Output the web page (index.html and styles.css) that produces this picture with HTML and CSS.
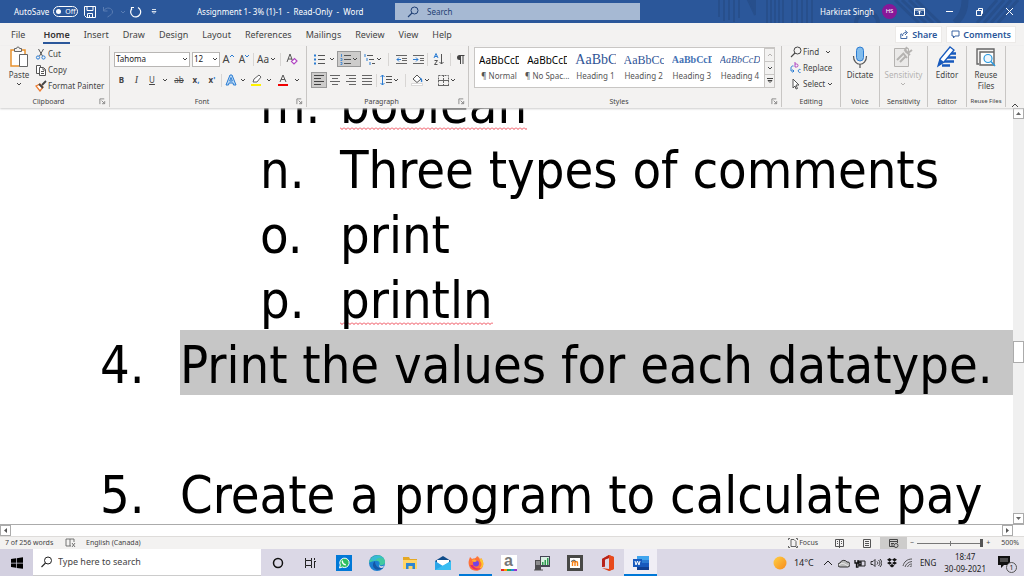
FILE: index.html
```html
<!DOCTYPE html>
<html lang="en">
<head>
<meta charset="utf-8">
<title>Assignment 1- 3% (1)-1 - Read-Only - Word</title>
<link rel="stylesheet" href="styles.css">
</head>
<body>
<svg class="defs" aria-hidden="true">
  <symbol id="chev" viewBox="0 0 8 8"><path d="M2 3l2 2 2-2" fill="none" stroke="currentColor"/></symbol>
  <symbol id="launch" viewBox="0 0 8 8"><path d="M1 7V1h5M3 3l3 3M6.500 3.500v3h-3" fill="none" stroke="#666" stroke-width=".8"/></symbol>
  <symbol id="lens" viewBox="0 0 12 12"><circle cx="7.500" cy="4.500" r="3.500" fill="none" stroke="currentColor"/><path d="M5 7L1 11" stroke="currentColor" stroke-width="1.100"/></symbol>
</svg>
<div class="app">
  <header class="titlebar">
    <svg class="pattern" viewBox="0 0 310 23" preserveAspectRatio="xMaxYMin slice" fill="none" stroke="#274f8c" stroke-width="2">
      <path d="M5 0v17M10 0v21M15 0v20M20 0v22M25 0v18M53 0v23M57 0v23M61 0v23M65 0v23M69 0v23M78 0v23M83 0v23M88 0v23M93 0v23M98 0v23"/>
      <path d="M34 0l7 15V0z" fill="#274f8c"/>
      <path d="M142 23a11 11 0 0 1 22 0" stroke-width="4"/>
      <path d="M188 0l24 23M195 0l24 23M202 0l24 23M181 0l24 23" stroke-width="3"/>
      <path d="M251 0a30 30 0 0 1-10 23" stroke-width="7"/>
      <path d="M263 23l20-23M270 23l20-23M277 23l20-23M284 23l20-23" stroke-width="3"/>
    </svg>
    <div class="quick">
      <label class="autosave">AutoSave <span class="toggle"><input type="checkbox" aria-label="AutoSave"><i></i>Off</span></label>
      <button class="w16" aria-label="Save"><svg width="12" height="12" viewBox="0 0 12 12" fill="none" stroke="#fff"><path d="M.500.500h11v11h-9l-2-2zM3 .500v4h6v-4M3.500 11.500v-4h5v4M5.500 9v2"/></svg></button>
      <button class="w20 faded" aria-label="Undo"><svg width="12" height="12" viewBox="0 0 12 12" fill="none" stroke="currentColor"><path d="M1.500 1v4h4M1.500 5c3-5 9-3 9 1 0 2-2 3-5 5"/></svg></button>
      <button class="w10 faded" aria-label="Undo options"><svg class="chev"><use href="#chev"/></svg></button>
      <button class="w16" aria-label="Redo"><svg width="12" height="12" viewBox="0 0 12 12" fill="none" stroke="#fff" stroke-width="1.200"><path d="M4 1.500H1.500V4M2 2.500a5 5 0 1 0 6-1"/></svg></button>
      <button class="w20" aria-label="Customize"><svg width="6" height="6" viewBox="0 0 6 6" fill="none" stroke="#fff" stroke-width=".8"><path d="M1 .500h4M1 2.500l2 2 2-2z"/></svg></button>
    </div>
    <h1 class="doctitle">Assignment 1- 3% (1)-1&nbsp; -&nbsp; Read-Only&nbsp; -&nbsp; Word</h1>
    <label class="search"><svg width="12" height="12"><use href="#lens"/></svg><input type="text" placeholder="Search" aria-label="Search"></label>
    <div class="account">
      <span>Harkirat Singh</span><span class="avatar">HS</span>
      <button aria-label="Ribbon display options"><svg width="11" height="9" viewBox="0 0 11 9" fill="none" stroke="#fff"><path d="M.500 1.500h10v7H.500zM.500 3h10M5.500 7.500V4M4 5.500L5.500 4 7 5.500"/></svg></button>
      <button aria-label="Minimize"><svg width="9" height="9" viewBox="0 0 9 9" stroke="#fff"><path d="M1 4.500h7" /></svg></button>
      <button aria-label="Restore"><svg width="9" height="9" viewBox="0 0 9 9" fill="none" stroke="#fff"><path d="M1.500 3.500h5v5h-5zM3.500 3V1.500h4v5H7"/></svg></button>
      <button aria-label="Close"><svg width="9" height="9" viewBox="0 0 9 9" stroke="#fff"><path d="M1 1l7 7M8 1L1 8"/></svg></button>
    </div>
  </header>

  <nav class="tabs">
    <button class="file">File</button><button class="current">Home</button><button>Insert</button><button>Draw</button><button>Design</button><button>Layout</button><button>References</button><button>Mailings</button><button>Review</button><button>View</button><button>Help</button>
    <div class="tabs-right">
      <button class="pill"><svg width="9" height="9" viewBox="0 0 9 9" fill="none" stroke="currentColor" stroke-width=".9"><path d="M2 4H.800v4.500h6V6M2.500 6c0-3 2-3.500 4-3.500M5 .500L7.500 2.500 5 5"/></svg>Share</button>
      <button class="pill"><svg width="9" height="9" viewBox="0 0 9 9" fill="none" stroke="currentColor" stroke-width=".9"><path d="M1 1h7v5H4L2.500 8V6H1z"/></svg>Comments</button>
    </div>
  </nav>

  <section class="ribbon">
    <div class="group g-clip">
      <div class="body clip">
        <button class="big"><svg width="20" height="22" viewBox="0 0 20 22" fill="none"><path d="M2 4h14v16H2z" fill="#fff" stroke="#e8912d" stroke-width="1.500"/><path d="M5.500 5.500v-3h2a1.500 1.500 0 0 1 3 0h2v3z" fill="#f3f2f1" stroke="#666"/><path d="M10.500 8.500h8v12h-8z" fill="#fff" stroke="#666"/></svg>Paste<svg class="chev"><use href="#chev"/></svg></button>
        <div class="stack">
          <button><svg width="12" height="12" viewBox="0 0 12 12" fill="none"><path d="M3.500 1l4 7M8.500 1l-4 7" stroke="#555"/><circle cx="3" cy="9.500" r="1.600" stroke="#2b7cd3"/><circle cx="8.500" cy="9.500" r="1.600" stroke="#2b7cd3"/></svg>Cut</button>
          <button><svg width="12" height="12" viewBox="0 0 12 12" fill="#fff" stroke="#555"><path d="M4 9.500H1.500v-8h4v2M4.500 3.500h4l2 2v6h-6zM8 4v2h2.500M6 7.500h3M6 9.500h3" /></svg>Copy</button>
          <button><svg width="12" height="12" viewBox="0 0 12 12"><path d="M1 6l4-2 3 3-3 4z" fill="#fff" stroke="#ed7d31" stroke-width="1.300"/><path d="M4 4l4 4M7 5l4-4" stroke="#444" stroke-width="1.800"/></svg>Format Painter</button>
        </div>
      </div>
      <div class="name">Clipboard<svg class="launch"><use href="#launch"/></svg></div>
    </div>

    <div class="group g-font">
      <div class="body rows">
        <div class="row">
          <select class="font-name" aria-label="Font"><option>Tahoma</option></select><select class="font-size" aria-label="Font size"><option>12</option></select>
          <button class="w16 t11" aria-label="Grow font">A<svg class="sup" viewBox="0 0 4 4"><path d="M0 3l2-2 2 2" fill="none" stroke="#2b7cd3"/></svg></button><button class="w16 t10" aria-label="Shrink font">A<svg class="sup" viewBox="0 0 4 4"><path d="M0 1l2 2 2-2" fill="none" stroke="#2b7cd3"/></svg></button><i class="sep"></i>
          <button class="w24 t10">Aa<svg class="chev"><use href="#chev"/></svg></button><i class="sep"></i>
          <button class="w20" aria-label="Clear formatting"><svg width="12" height="12" viewBox="0 0 12 12" fill="none"><path d="M1 9l3-8 3 8M2 6h4" stroke="#555"/><path d="M5.500 8.500l3-3 2.500 2.500-3 3z" fill="#fff" stroke="#b146c2" stroke-width="1.200"/></svg></button>
        </div>
        <div class="row">
          <button class="w15"><b>B</b></button><button class="w15"><em class="serif">I</em></button><button class="w16"><u>U</u></button><button class="w10" aria-label="Underline options"><svg class="chev"><use href="#chev"/></svg></button><button class="w18"><s>ab</s></button><button class="w16"><b>x</b><sub>,</sub></button><button class="w16"><b>x</b><sup>'</sup></button><i class="sep"></i>
          <button class="w16 fx" aria-label="Text effects"><svg width="12" height="12" viewBox="0 0 12 12" fill="none" stroke="#2b7cd3"><path d="M1 11L5 1h2l4 10H8.500L8 9H4l-.500 2zM6 3.500L4.700 7h2.600z" fill="#b9d9f5"/></svg></button><button class="w8" aria-label="Effects options"><svg class="chev"><use href="#chev"/></svg></button>
          <button class="w18" aria-label="Highlight"><svg width="12" height="12" viewBox="0 0 12 12"><path d="M3 8l1-3 5-4 2 2-4 5z" fill="#fff" stroke="#555" stroke-width=".9"/><path d="M1 10h10v2H1z" fill="#fff200"/></svg></button><button class="w8" aria-label="Highlight options"><svg class="chev"><use href="#chev"/></svg></button>
          <button class="w20" aria-label="Font color"><svg width="12" height="12" viewBox="0 0 12 12"><path d="M3 8l3-7 3 7M4 5.500h4" fill="none" stroke="#555"/><path d="M1 10h10v2H1z" fill="#f00000"/></svg></button><button class="w8" aria-label="Color options"><svg class="chev"><use href="#chev"/></svg></button>
        </div>
      </div>
      <div class="name">Font<svg class="launch"><use href="#launch"/></svg></div>
    </div>

    <div class="group g-para">
      <div class="body rows">
        <div class="row">
          <button class="w16" aria-label="Bullets"><svg width="11" height="11" viewBox="0 0 11 11"><path d="M0 1.500h2M0 5.500h2M0 9.500h2" stroke="#2b7cd3" stroke-width="2"/><path d="M4 1.500h7M4 5.500h7M4 9.500h7" stroke="#555"/></svg></button><button class="w10" aria-label="Bullet options"><svg class="chev"><use href="#chev"/></svg></button>
          <button class="w24 on" aria-label="Numbering"><svg width="11" height="11" viewBox="0 0 11 11"><path d="M1.500 0v3M.500 4.500h1.500v2H.500M.500 8.500h1.500v2H.500" stroke="#2b7cd3" fill="none" stroke-width=".8"/><path d="M4 1.500h7M4 5.500h7M4 9.500h7" stroke="#555"/></svg><svg class="chev"><use href="#chev"/></svg></button>
          <button class="w24" aria-label="Multilevel list"><svg width="11" height="11" viewBox="0 0 11 11"><path d="M1 0v3M3 4v3M6 8v3" stroke="#2b7cd3"/><path d="M3 1.500h6M5 5.500h5M8 9.500h3" stroke="#555"/></svg><svg class="chev"><use href="#chev"/></svg></button><i class="sep gap"></i>
          <button class="w18" aria-label="Decrease indent"><svg width="11" height="11" viewBox="0 0 11 11"><path d="M0 1.500h11M6 4.500h5M6 6.500h5M0 9.500h11" stroke="#666"/><path d="M5 5.500H1M3 3.500l-2 2 2 2" fill="none" stroke="#2b7cd3"/></svg></button><button class="w16" aria-label="Increase indent"><svg width="11" height="11" viewBox="0 0 11 11"><path d="M0 1.500h11M7 4.500h4M7 6.500h4M0 9.500h11" stroke="#666"/><path d="M0 5.500h5M3 3.500l2 2-2 2" fill="none" stroke="#2b7cd3"/></svg></button><i class="sep"></i>
          <button class="w20" aria-label="Sort"><svg width="12" height="12" viewBox="0 0 12 12" fill="none"><path d="M1 5l2-4.500L5 5M2 3.500h2" stroke="#2b7cd3"/><path d="M1.500 7.500h3l-3 4h3M8.500 1v10M6.500 9l2 2 2-2" stroke="#555"/></svg></button><i class="sep"></i>
          <button class="w16" aria-label="Show marks"><svg width="9" height="11" viewBox="0 0 9 11"><path d="M4.500 10V1.500h4M7 1v9" fill="none" stroke="#444"/><path d="M5 1H3.500a2 2 0 0 0 0 5H5z" fill="#444"/></svg></button>
        </div>
        <div class="row">
          <button class="w16 on" aria-label="Align left"><svg width="10" height="10" viewBox="0 0 10 10" stroke="#444"><path d="M0 .500h10M0 3.500h7M0 6.500h10M0 9.500h7"/></svg></button><button class="w16" aria-label="Center"><svg width="10" height="10" viewBox="0 0 10 10" stroke="#666"><path d="M0 .500h10M2 3.500h6M0 6.500h10M2 9.500h6"/></svg></button><button class="w16" aria-label="Align right"><svg width="10" height="10" viewBox="0 0 10 10" stroke="#666"><path d="M0 .500h10M3 3.500h7M0 6.500h10M3 9.500h7"/></svg></button><button class="w16" aria-label="Justify"><svg width="10" height="10" viewBox="0 0 10 10" stroke="#666"><path d="M0 .500h10M0 3.500h10M0 6.500h10M0 9.500h10"/></svg></button><i class="sep"></i>
          <button class="w24" aria-label="Line spacing"><svg width="12" height="12" viewBox="0 0 12 12" fill="none"><path d="M2.500 1v10M.500 3l2-2 2 2M.500 9l2 2 2-2" stroke="#2b7cd3"/><path d="M6 2.500h6M6 5.500h6M6 8.500h6" stroke="#555"/></svg><svg class="chev"><use href="#chev"/></svg></button><i class="sep gap"></i>
          <button class="w24" aria-label="Shading"><svg width="12" height="12" viewBox="0 0 12 12"><path d="M2 5l4-4 4 4-4 3.500z" fill="#fff" stroke="#555"/><path d="M9 4c2 1 2 2 1.500 4" fill="none" stroke="#2b7cd3" stroke-width="1.300"/><path d="M.500 9.500h11v2H.500z" fill="#fff" stroke="#bbb" stroke-width=".5"/></svg><svg class="chev"><use href="#chev"/></svg></button>
          <button class="w24 borders" aria-label="Borders"><svg width="11" height="11" viewBox="0 0 11 11" fill="none" stroke="#666"><path d="M.500.500h10v10H.500zM5.500 0v11" stroke-dasharray="2 1"/><path d="M0 5.500h11M0 10.500h11"/></svg><svg class="chev"><use href="#chev"/></svg></button>
        </div>
      </div>
      <div class="name">Paragraph<svg class="launch"><use href="#launch"/></svg></div>
    </div>

    <div class="group g-styles">
      <div class="body">
        <div class="gallery">
          <button><span class="pv">AaBbCcD</span>¶ Normal</button>
          <button><span class="pv">AaBbCcD</span>¶ No Spac...</button>
          <button><span class="pv h1">AaBbC</span>Heading 1</button>
          <button><span class="pv h2">AaBbCc</span>Heading 2</button>
          <button><span class="pv h3">AaBbCcD</span>Heading 3</button>
          <button><span class="pv h4">AaBbCcD</span>Heading 4</button>
          <div class="spin"><button class="dim" aria-label="Scroll up"><svg width="6" height="4" viewBox="0 0 6 4"><path d="M1 3l2-2 2 2" fill="none" stroke="currentColor"/></svg></button><button aria-label="Scroll down"><svg class="chev"><use href="#chev"/></svg></button><button aria-label="More styles"><svg width="6" height="6" viewBox="0 0 6 6"><path d="M0 .500h6M1 2.500l2 2 2-2z" fill="none" stroke="currentColor"/></svg></button></div>
        </div>
      </div>
      <div class="name">Styles<svg class="launch"><use href="#launch"/></svg></div>
    </div>

    <div class="group g-edit">
      <div class="body stack">
        <button><svg width="12" height="12"><use href="#lens"/></svg>Find<svg class="chev far"><use href="#chev"/></svg></button>
        <button><svg width="12" height="12" viewBox="0 0 12 12" fill="none"><path d="M5 0v5h1.500a1.500 1.500 0 0 0 0-3H5" stroke="#b146c2"/><path d="M3.500 4A2 2 0 0 0 1 6v3h3M2.500 7.500L4 9l-1.500 1.500M10.500 7.500c-3-1-3 3.500 0 3" stroke="#2b7cd3"/></svg>Replace</button>
        <button><svg width="12" height="12" viewBox="0 0 12 12"><path d="M3 1l6 6H6l1.500 3.500L6 11 5 8 3 10z" fill="#fff" stroke="#555"/></svg>Select<svg class="chev"><use href="#chev"/></svg></button>
      </div>
      <div class="name">Editing</div>
    </div>
    <div class="group g-voice">
      <div class="body"><button class="big"><svg width="16" height="22" viewBox="0 0 16 22" fill="none"><rect x="4.500" y="1" width="7" height="14" rx="3.500" fill="#83bdec" stroke="#2b7cd3"/><path d="M1.500 10c0 11 13 11 13 0M8 18v4" stroke="#555" stroke-width="1.200"/></svg>Dictate</button></div>
      <div class="name">Voice</div>
    </div>
    <div class="group g-sens">
      <div class="body"><button class="big dim" disabled><svg width="20" height="22" viewBox="0 0 20 22" fill="none" stroke="#b5b3b1"><path d="M1.500 2.500h14v18h-14z" fill="#eae9e8"/><path d="M4 14l7-7M7 16l6-6M12 5l5 4M14 1l-2 3 3 3 4-3M10 7l4 5" stroke-width="2"/></svg>Sensitivity<svg class="chev"><use href="#chev"/></svg></button></div>
      <div class="name">Sensitivity</div>
    </div>
    <div class="group g-editor">
      <div class="body"><button class="big"><svg width="22" height="22" viewBox="0 0 22 22"><path d="M13 7.500h7M10 11.500h10M8 15.500h10M6 19.500h8" stroke="#185abd" stroke-width="2.600"/><path d="M2 20l2-7L14 1l4 3L8 16z" fill="#fff" stroke="#185abd" stroke-width="1.300"/><path d="M4 13l4 3-6 4z" fill="#185abd"/></svg>Editor</button></div>
      <div class="name">Editor</div>
    </div>
    <div class="group g-reuse">
      <div class="body"><button class="big"><svg width="20" height="22" viewBox="0 0 20 22" fill="none"><path d="M3 18H1V3h17v3M4 19V6h14v13z" stroke="#666" stroke-width="1.400"/><path d="M5 7h12v11H5z" fill="#fff"/><circle cx="12" cy="12.500" r="4" fill="#eef6fd" stroke="#2b9be0" stroke-width="1.200"/><path d="M15 15.500l4 4.500" stroke="#2b9be0" stroke-width="1.500"/></svg>Reuse<br>Files</button></div>
      <div class="name">Reuse Files</div>
    </div>
    <button class="collapse" aria-label="Collapse ribbon"><svg width="8" height="6" viewBox="0 0 8 6"><path d="M1 5l3-3 3 3" fill="none" stroke="#444"/></svg></button>
  </section>

  <main class="work">
    <article class="page">
      <ol class="outer">
        <li class="nest"><ol>
          <li><span class="mk">m.</span><span class="err">boolean</span></li>
          <li><span class="mk">n.</span><span>Three types of comments</span></li>
          <li><span class="mk">o.</span><span>print</span></li>
          <li><span class="mk">p.</span><span class="err">println</span></li>
        </ol></li>
        <li><span class="mk">4.</span><span class="sel">Print the values for each datatype.</span></li>
        <li class="blank"></li>
        <li><span class="mk">5.</span><span>Create a program to calculate pay</span></li>
      </ol>
    </article>
    <div class="vscroll"><button aria-label="Scroll up"><svg width="5" height="3" viewBox="0 0 5 3"><path d="M0 3L2.500 0 5 3z" fill="#666"/></svg></button><i class="thumb"></i><button aria-label="Scroll down"><svg width="5" height="3" viewBox="0 0 5 3"><path d="M0 0l2.500 3L5 0z" fill="#666"/></svg></button></div>
  </main>
  <div class="hscroll"><button aria-label="Scroll left"><svg width="3" height="5" viewBox="0 0 3 5"><path d="M3 0L0 2.500 3 5z" fill="#555"/></svg></button><i class="track"></i><button aria-label="Scroll right"><svg width="3" height="5" viewBox="0 0 3 5"><path d="M0 0l3 2.500L0 5z" fill="#555"/></svg></button></div>

  <footer class="status">
    <span class="words">7 of 256 words</span>
    <svg width="11" height="10" viewBox="0 0 11 10" fill="none" stroke="#666" stroke-width=".9"><path d="M5 1H1v7h4V1zM5 1h4v3M5 8h1M7 5l3 4M10 5L7 9"/></svg>
    <span class="lang">English (Canada)</span>
    <div class="views">
      <button class="focus"><svg width="10" height="10" viewBox="0 0 10 10" fill="none" stroke="#555" stroke-width=".9"><path d="M3 1.500h3l2 2v5H3zM2 .500H.500V2M.500 8v1.500H2M8 .500h1.500V2M9.500 8v1.500H8"/></svg>Focus</button>
      <button class="view" aria-label="Read mode"><svg width="9" height="9" viewBox="0 0 9 9" fill="none" stroke="#555"><path d="M.500.500h8v7h-8zM4.500 0v9M2 2.500h1M2 4.500h1M6 2.500h1M6 4.500h1"/></svg></button>
      <button class="view" aria-label="Print layout"><svg width="8" height="9" viewBox="0 0 8 9" fill="none" stroke="#555"><path d="M.500.500h7v8h-7zM2 2.500h4M2 4.500h4M2 6.500h4"/></svg></button>
      <button class="view on" aria-label="Web layout"><svg width="10" height="9" viewBox="0 0 10 9" fill="none" stroke="#444"><path d="M5 7.500H.500v-7h8V4M0 2.500h8M2 4.500h3M2 6h2"/><circle cx="7" cy="6.500" r="2"/></svg></button>
      <button class="zb" aria-label="Zoom out">−</button><input type="range" min="10" max="500" value="500" aria-label="Zoom"><button class="zb" aria-label="Zoom in">+</button>
      <span class="pct">500%</span>
    </div>
  </footer>

  <footer class="taskbar">
    <button class="start" aria-label="Start"><svg width="12" height="12" viewBox="0 0 12 12"><path d="M0 2l5-.700v4.400H0zM5.700 1.200L12 .300v5.400H5.700zM0 6.400h5v4.400L0 10zM5.700 6.400H12v5.400l-6.300-.900z"/></svg></button>
    <label class="tsearch"><svg width="13" height="12" viewBox="0 0 12 12"><use href="#lens"/></svg><input type="text" placeholder="Type here to search" aria-label="Type here to search"></label>
    <div class="apps">
      <button aria-label="Cortana"><svg width="16" height="16" viewBox="0 0 16 16"><circle cx="8" cy="8" r="4.500" fill="none" stroke="#111" stroke-width="1.500"/></svg></button>
      <button aria-label="Task view"><svg width="16" height="16" viewBox="0 0 16 16" fill="none" stroke="#222"><path d="M2.500 3v2.500h6V3M2.500 13v-2.500h6V13M2.500 5.500v5M8.500 5.500v5M11.500 3v2M11.500 6.500v6.500M11 6.500h2"/></svg></button>
      <button aria-label="WhatsApp"><svg width="16" height="16" viewBox="0 0 16 16"><path d="M0 0h16v16H0z" fill="#0078d7"/><path d="M3.500 13l.800-3a4.700 4.700 0 1 1 2 2z" fill="#2fbf62" stroke="#fff"/><path d="M6.300 5.500c0 2.500 1.500 4 3.500 4.200" fill="none" stroke="#fff" stroke-width="1.400"/></svg></button>
      <button aria-label="Edge"><svg width="16" height="16" viewBox="0 0 16 16"><circle cx="8" cy="8" r="8" fill="#1b7fd1"/><path d="M0 8C1-1 14-3 16 6c1 4-4 5-6 4 2-3-1-5-4-4-3 0-5 1-6 2z" fill="#41c9a0"/><path d="M2 5C5-1 12 0 15 4c-3-2-7-2-9 2-2-1-3-1-4-1z" fill="#36b9d8"/><path d="M6 6c-5 4 0 11 6 8 1 0 2-1 2-2-4 2-8 0-8-6z" fill="#1557a5"/><path d="M10 10c2 2 4 1 5 .500l-1 2c-2 1-4 0-4-2.500z" fill="#dcd8e8"/></svg></button>
      <button aria-label="File Explorer"><svg width="16" height="16" viewBox="0 0 16 16"><path d="M1 2h6l1 2h7v10H1z" fill="#e5a823"/><path d="M1 5h14v9H1z" fill="#ffd566"/><path d="M4 14V8h9v6h-2.500v-3h-4v3z" fill="#2f86d2"/></svg></button>
      <button aria-label="Mail"><svg width="16" height="16" viewBox="0 0 16 16"><path d="M0 6l8-5 8 5v9H0z" fill="#0f4c8a"/><path d="M2 5h12v6H2z" fill="#fff"/><path d="M0 6l8 5 8-5v9H0z" fill="#2aa5e8"/><path d="M0 15L16 6v9z" fill="#38bdf2"/></svg></button>
      <button class="run" aria-label="Firefox"><svg width="16" height="16" viewBox="0 0 16 16"><path d="M1 5l1-3 2 2c2-1 4 0 5-3 2 1 3 3 3 4l1-2c3 4 3 8 0 11-3 3-9 2-11-1-1-2-2-5-1-8z" fill="#ff7139"/><path d="M9 1c2 1 3 3 3 5 3 3 1 7-2 8 6 0 7-7 3-11l-1 2C12 3 11 2 9 1z" fill="#ffc62d"/><path d="M2 10c2 5 8 6 11 3-4 1-7 0-8-3z" fill="#e62b68"/><circle cx="8" cy="8.500" r="3" fill="#7542e5"/><path d="M4 5c2-1 4 0 5 1L7 7c-2 0-3-1-3-2z" fill="#ffb02e"/></svg></button>
      <button class="letter" aria-label="Alexa"><span>a</span></button>
      <button aria-label="Server manager"><svg width="16" height="16" viewBox="0 0 16 16"><path d="M6 1h10v11H6z" fill="#445"/><path d="M7 2h8v8H7z" fill="#d9efe3"/><path d="M8 10V7h1.500v3M10.500 10V5H12v5M13 10V3h1.500v7" fill="#2d9b50"/><path d="M1 5h6v10H1z" fill="#4d4d50"/><path d="M2 7h4M2 9h4" stroke="#ccc"/><path d="M0 15h9" stroke="#555"/></svg></button>
      <button aria-label="Moodle"><svg width="16" height="16" viewBox="0 0 16 16"><path d="M0 0h16v16H0z" fill="#484846"/><path d="M3 3h10v10H3z" fill="#fff"/><path d="M5.500 11V7.500c0-1 2.500-1 2.500 0V11M8 7.500c0-1 2.500-1 2.500 0V11" fill="none" stroke="#f98012" stroke-width="1.400"/><path d="M4 6.500L7 5l2 1.500" fill="none" stroke="#555"/></svg></button>
      <button aria-label="Office"><svg width="16" height="16" viewBox="0 0 16 16"><path d="M2 4l7-4 5 2v12l-5 2-7-3 7 1V3L5 4.500v7L2 12z" fill="#dc3e15"/><path d="M9 0l5 2v12l-5 2z" fill="#e84a1c"/><path d="M2 4l7-4v3L5 4.500v7L2 12z" fill="#b7231b"/></svg></button>
      <button class="run active" aria-label="Word"><svg width="16" height="16" viewBox="0 0 16 16"><path d="M4 1h12v14H4z" fill="#2b7cd3"/><path d="M4 1h12v4H4z" fill="#41a5ee"/><path d="M4 8h12v4H4z" fill="#185abd"/><path d="M4 12h12v3H4z" fill="#103f91"/><path d="M0 4h9v8H0z" fill="#185abd"/><path d="M2 6l1 4 1.500-4L6 10l1-4" fill="none" stroke="#fff"/></svg></button>
    </div>
    <div class="tray">
      <svg width="14" height="14" viewBox="0 0 14 14"><defs><linearGradient id="sun" x2="1" y2="1"><stop stop-color="#ffd044"/><stop offset="1" stop-color="#f78a1d"/></linearGradient></defs><circle cx="7" cy="7" r="6.500" fill="url(#sun)"/></svg>
      <span class="temp">14°C</span>
      <div class="tray-icons">
        <svg viewBox="0 0 12 12"><path d="M2 8l4-4 4 4" fill="none" stroke="#222"/></svg>
        <svg viewBox="0 0 12 12"><path d="M2 10a2 2 0 0 1 0-4 4 4 0 0 1 7-1 2.500 2.500 0 0 1 1 5z" fill="#bbb" stroke="#333"/><path d="M1 8c3-3 6-1 9 1" fill="none" stroke="#eee"/></svg>
        <svg viewBox="0 0 12 12"><path d="M4 4h7v5H4z" fill="none" stroke="#222"/><path d="M5 5h2v3H5zM1 3v3h3V3M2.500 6v4h2" fill="none" stroke="#111" stroke-width="1.300"/></svg>
        <svg viewBox="0 0 12 12" fill="none" stroke="#222" stroke-width=".9"><path d="M1 4.500h2l2-2v7l-2-2H1zM7 4.500c1 1 1 2 0 3M8.500 3c2 2 2 4 0 6M10 2c2.500 3 2.500 5 0 8"/></svg>
        <svg viewBox="0 0 12 12"><path d="M3.500 1L6 2.700 3.500 4.400 1 2.700zM8.500 1L11 2.700 8.500 4.400 6 2.700zM3.500 4.400L6 6.100 3.500 7.800 1 6.100zM8.500 4.400L11 6.100 8.500 7.800 6 6.100zM6 7l2.500 1.700L6 10.500 3.500 8.700z" fill="#111"/></svg>
        <svg viewBox="0 0 12 12" fill="none" stroke="#444" stroke-width=".9"><path d="M1 9c1-4 4-7 9-7M3 10c1-3 3-5 7-5.500M5.500 10c1-2 2-3 4.500-3M8 10c.500-1 1-1 2-1"/></svg>
      </div>
      <span class="eng">ENG</span>
      <time>18:47<br>30-09-2021</time>
      <button class="note" aria-label="Notifications"><svg width="14" height="13" viewBox="0 0 14 13"><path d="M0 0h12v9H6l-3 3V9H0z" fill="#111"/><path d="M2 3h8M2 5h8" stroke="#bbb" stroke-width=".7"/></svg><span>1</span></button>
    </div>
  </footer>
</div>
</body>
</html>
```

FILE: styles.css
```css
* { box-sizing: border-box; }
body { margin: 0; font: 8px/12px "Noto Sans", "Open Sans", sans-serif; color: #444; background: #fff; }
button, input, select { font: inherit; color: inherit; background: none; border: 0; padding: 0; margin: 0; border-radius: 0; }
button { display: flex; align-items: center; justify-content: center; flex: none; white-space: nowrap; }
svg { flex: none; display: block; }
.defs { position: absolute; width: 0; height: 0; }
.chev { width: 8px; height: 8px; }
.app { height: 100vh; display: flex; flex-direction: column; overflow: hidden; }

.w8 { width: 8px; } .w10 { width: 10px; } .w15 { width: 15px; } .w16 { width: 16px; }
.w18 { width: 18px; } .w20 { width: 20px; } .w24 { width: 24px; }
.t10 { font-size: 10px; } .t11 { font-size: 11px; }
.serif { font-family: "Liberation Serif", serif; font-size: 10px; }

.titlebar { position: relative; flex: none; height: 23px; display: flex; align-items: center; background: #2b579a; color: #fff; }
.titlebar > * { position: relative; }
.titlebar .pattern { position: absolute; right: 0; top: 0; width: 310px; height: 23px; }
.quick { display: flex; align-items: center; width: 197px; padding-left: 14px; flex: none; }
.autosave { display: flex; align-items: center; gap: 4px; margin-right: 4px; white-space: nowrap; }
.toggle { display: flex; align-items: center; width: 25px; height: 11px; border: 1px solid #fff; border-radius: 6px; font-size: 7px; gap: 4px; padding-left: 2px; }
.toggle input { position: absolute; opacity: 0; }
.toggle i { width: 5px; height: 5px; border-radius: 50%; background: #fff; }
.faded { color: #5a7db3; }
.doctitle { margin: 0; font: inherit; width: 198px; flex: none; white-space: nowrap; }
.search { display: flex; align-items: center; flex: 0 1 245px; height: 17px; padding-left: 12px; gap: 8px; background: #a6b9d3; color: #1f3f74; }
.search input { flex: 1; min-width: 0; }
.search input::placeholder { color: #1f3f74; opacity: 1; }
.account { margin-left: auto; display: flex; align-items: center; white-space: nowrap; }
.avatar { width: 15px; height: 15px; border-radius: 50%; background: #881798; font-size: 6px; line-height: 15px; text-align: center; margin: 0 7px 0 8px; }
.account button { width: 30px; height: 23px; }

.tabs { flex: none; height: 23px; display: flex; align-items: center; background: #f3f2f1; padding-left: 11px; gap: 14px; font-size: 9px; }
.tabs button { height: 19px; }
.tabs .file { margin-right: 4px; }
.tabs .current { font-weight: 600; box-shadow: inset 0 -2px #2b579a; color: #333; }
.tabs-right { margin-left: auto; display: flex; gap: 6px; padding-right: 9px; }
.tabs .pill { height: 15px; background: #fff; color: #2b579a; font-weight: 600; padding: 0 4px; gap: 3px; outline: 1px solid #eceae8; }

.ribbon { position: relative; z-index: 1; flex: none; height: 62px; display: flex; background: #f3f2f1; box-shadow: 0 1px 2px #ccc; }
.group { flex: none; display: flex; flex-direction: column; justify-content: space-between; border-right: 1px solid #c8c6c4; margin-bottom: 1px; }
.g-clip { width: 110px; } .g-font { width: 197px; } .g-para { width: 162px; } .g-styles { flex: 1; min-width: 0; }
.g-edit { width: 59px; } .g-voice { width: 39px; } .g-sens { width: 48px; } .g-editor { width: 39px; } .g-reuse { width: 39px; }
.name { position: relative; text-align: center; font-size: 7px; line-height: 11px; white-space: nowrap; padding-right: 12px; }
.g-edit ~ .group .name, .g-edit .name { padding: 0; }
.g-reuse .name { font-size: 6px; }
.launch { position: absolute; right: 3px; top: 2px; width: 7px; height: 7px; }
.clip { display: flex; padding-left: 8px; }
.big { flex-direction: column; margin: 0 auto; justify-content: flex-start; line-height: 11px; text-align: center; white-space: normal; }
.big > svg:first-child { margin-bottom: 1px; }
.clip .big { margin: 0; width: 22px; }
.stack { display: flex; flex-direction: column; gap: 4px; padding-left: 5px; }
.stack button { height: 12px; justify-content: flex-start; gap: 1px; }
.clip .stack { padding-top: 2px; }
.body.stack { padding: 0 0 0 8px; }
.far { margin-left: 4px; }
.collapse { width: 18px; align-self: flex-end; }
.dim { color: #b5b3b1; }

.rows { display: flex; flex-direction: column; gap: 5px; padding: 5px 0 0 4px; }
.row { display: flex; align-items: center; height: 16px; }
.row button { height: 16px; }
.sep { width: 1px; height: 13px; background: #d8d6d4; margin: 0 1px; flex: none; }
.gap { margin: 0 3px; }
.on { background: #cdcccb; }
.row .on { outline: 1px solid #999; outline-offset: -1px; }
.borders { margin-left: 2px; }
.row select { appearance: none; height: 15px; border: 1px solid #b8b6b4; background: #fff url('data:image/svg+xml,<svg xmlns="http://www.w3.org/2000/svg" viewBox="0 0 6 4"><path d="M1 1l2 2 2-2" fill="none" stroke="%23444"/></svg>') no-repeat right 1px center / 6px 4px; padding-left: 1px; color: #222; }
.row .font-name { width: 76px; margin-right: 2px; }
.row .font-size { width: 28px; }
.sup { width: 4px; height: 4px; margin-bottom: 6px; }
.row sub, .row sup { color: #2b7cd3; font-size: 8px; line-height: 1; font-weight: 700; }

.gallery { display: flex; height: 41px; margin: 1px 6px 0 5px; background: #fff; border: 1px solid #c8c6c4; overflow: hidden; }
.gallery > button { flex: 1 1 0; min-width: 0; flex-direction: column; gap: 3px; padding: 0 4px; color: #555; }
.pv { width: 100%; height: 14px; line-height: 14px; overflow: hidden; text-align: left; font-size: 10px; color: #000; }
.h1, .h2, .h3, .h4 { font-family: "Liberation Serif", serif; color: #2f5496; }
.h1 { font-size: 14px; } .h2 { font-size: 12px; } .h3 { font-size: 10px; font-weight: 700; color: #4472b4; } .h4 { font-size: 10px; font-style: italic; }
.spin { width: 10px; display: flex; flex-direction: column; border-left: 1px solid #c8c6c4; }
.spin button { flex: 1; border-top: 1px solid #c8c6c4; background: #f3f2f1; }

.work { flex: 1; min-height: 0; display: flex; }
.page { flex: 1; min-width: 0; overflow: hidden; padding-left: 100px; font: 52px/59px "DejaVu Sans Condensed", "Noto Sans", sans-serif; color: #000; }
.page ol { list-style: none; margin: 0; padding: 0; }
.page .outer { margin-top: -38px; }
.page li { display: flex; height: 65px; white-space: nowrap; }
.page .nest { height: auto; padding-left: 160px; }
.page li > span { padding-top: 6px; }
.mk { width: 80px; flex: none; }
.sel { flex: 1; background: #c6c6c6; }
.err { background: url('data:image/svg+xml,<svg xmlns="http://www.w3.org/2000/svg" width="4" height="3" viewBox="0 0 4 3"><path d="M0 .5l2 2 2-2" fill="none" stroke="%23e81123" stroke-width=".8"/></svg>') repeat-x 0 57px / 4px 3px; }

.vscroll { width: 11px; display: flex; flex-direction: column; background: #f0f0f0; }
.vscroll button, .hscroll button { width: 11px; height: 11px; border: 1px solid #ababab; background: #fff; }
.thumb { margin: auto 0; height: 22px; background: #fff; border: 1px solid #ababab; }
.vscroll .thumb { margin-top: 222px; }
.hscroll { flex: none; display: flex; height: 12px; border-top: 1px solid #ababab; padding-right: 11px; background: #fff; }
.hscroll .track { flex: 1; }

.status { flex: none; height: 13px; display: flex; align-items: center; background: #f3f2f1; border-top: 1px solid #dedcda; font-size: 7px; padding: 0 5px; white-space: nowrap; }
.words { width: 60px; } .lang { margin-left: 10px; }
.views { margin-left: auto; display: flex; align-items: center; }
.focus { gap: 1px; margin-right: 8px; }
.view { width: 27px; height: 12px; }
.zb { width: 10px; }
.status input { appearance: none; width: 66px; height: 12px; background: linear-gradient(#777, #777) center / 1px 5px no-repeat, linear-gradient(#777, #777) center / 100% 1px no-repeat; }
.status input::-webkit-slider-thumb { appearance: none; width: 3px; height: 8px; background: #555; }
.pct { margin-left: 8px; }

.taskbar { flex: none; height: 27px; display: flex; background: #dbd8e6; color: #222; }
.start { width: 33px; background: #d3d0e0; }
.tsearch { display: flex; align-items: center; flex: 0 1 228px; padding-left: 7px; gap: 5px; background: #fff; border-bottom: 1px solid #ccc; font-size: 9px; color: #222; }
.tsearch input { flex: 1; min-width: 0; }
.tsearch input::placeholder { color: #444; opacity: 1; }
.apps { display: flex; }
.apps button { width: 33px; }
.apps .run { border-bottom: 2px solid #0078d7; border-top: 2px solid transparent; }
.apps .active { background: #f0eef5; }
.letter span { width: 16px; height: 16px; background: linear-gradient(90deg, #e22 20%, #f90 20% 40%, #2a5 40% 60%, #28d 60% 80%, #93c 80%) 0 14px / 100% 2px no-repeat #fff; font: 700 16px/12px "Liberation Sans", sans-serif; color: #777; }
.tray { margin-left: auto; display: flex; align-items: center; font-size: 9px; }
.temp { width: 28px; margin-left: 7px; }
.tray-icons { display: flex; gap: 4px; }
.tray-icons svg { width: 12px; height: 12px; }
.eng { margin: 0 8px 0 6px; font-size: 8px; }
time { text-align: center; font-size: 8px; line-height: 12px; white-space: nowrap; }
.note { position: relative; width: 38px; height: 27px; }
.note span { position: absolute; left: 20px; top: 13px; width: 11px; height: 11px; border: 1px solid #555; border-radius: 50%; background: #dbd8e6; font-size: 7px; line-height: 9px; }
```
